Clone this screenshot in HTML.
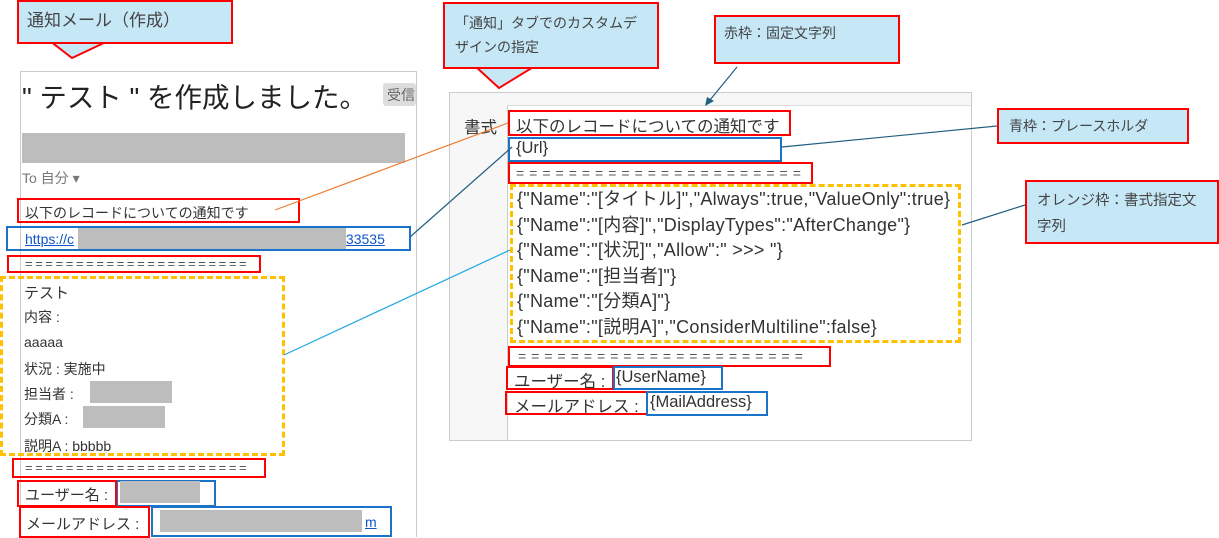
<!DOCTYPE html>
<html><head><meta charset="utf-8"><style>
body{margin:0;width:1219px;height:538px;position:relative;background:#fff;overflow:hidden;font-family:"Liberation Sans","Noto Sans CJK JP",sans-serif;color:#333}
.a{position:absolute;box-sizing:border-box;white-space:nowrap}
.cb{background:#c5e7f6;border:2px solid #f00;font-size:14px;color:#444;padding:6px 10px;line-height:24px;white-space:normal}
.r{border:2px solid #f00}
.b{border:2px solid #1a73c8}
.g{background:#bdbdbd}
.t{font-size:14px;color:#333}
.m{font-size:16.5px;color:#333}
.eq{letter-spacing:2.6px}
.eq2{letter-spacing:5px}
</style></head><body>
<svg class="a" style="left:0;top:0" width="1219" height="538">
<polygon points="50,41 108,41 72,58" fill="#c5e7f6" stroke="#f00" stroke-width="2"/>
<polygon points="475,66 535,66 499,88" fill="#c5e7f6" stroke="#f00" stroke-width="2"/>
</svg>
<div class="a cb" style="left:17px;top:0;width:216px;height:44px;font-size:17px;padding:7px 8px">通知メール（作成）</div>
<div class="a cb" style="left:443px;top:2px;width:216px;height:67px;line-height:24px;padding:7px 10px">「通知」タブでのカスタムデザインの指定</div>
<svg class="a" style="left:0;top:0" width="1219" height="538"><rect x="50" y="38" width="57" height="4" fill="#c5e7f6"/><rect x="476" y="63" width="58" height="4" fill="#c5e7f6"/></svg>
<div class="a cb" style="left:714px;top:15px;width:186px;height:49px;padding:4px 8px">赤枠：固定文字列</div>
<div class="a cb" style="left:997px;top:108px;width:192px;height:36px;padding:4px 10px">青枠：プレースホルダ</div>
<div class="a cb" style="left:1025px;top:180px;width:194px;height:64px;padding:6px 18px 6px 10px;line-height:26px;font-size:14.5px">オレンジ枠：書式指定文字列</div>

<!-- email panel -->
<div class="a" style="left:20px;top:71px;width:397px;height:466px;border:1px solid #ccc;border-bottom:none"></div>
<div class="a" style="left:22px;top:75px;font-size:27.5px;color:#222">" テスト " を作成しました。</div>
<div class="a" style="left:383px;top:83px;width:33px;height:23px;background:#ddd;border-radius:3px;font-size:14px;color:#666;padding:2px 4px;overflow:hidden">受信</div>
<div class="a g" style="left:22px;top:133px;width:383px;height:30px"></div>
<div class="a t" style="left:22px;top:168px;color:#777">To 自分 ▾</div>
<div class="a r t" style="left:17px;top:198px;width:283px;height:25px;padding:3px 6px 0 6px">以下のレコードについての通知です</div>
<div class="a b t" style="left:6px;top:226px;width:405px;height:25px;padding:3px 0 0 17px;color:#1155cc;text-decoration:underline">https://c<span style="display:inline-block;width:268px"></span>/33535</div>
<div class="a g" style="left:78px;top:228px;width:268px;height:21px"></div>
<div class="a r t eq" style="left:7px;top:255px;width:254px;height:18px;font-size:13px;line-height:14px;padding-left:16px;color:#555">======================</div>
<div class="a" style="left:0;top:276px;width:285px;height:180px;border:3px dashed #ffc000"></div>
<div class="a t" style="left:24px;top:282px;font-size:15px">テスト</div>
<div class="a t" style="left:24px;top:307px">内容 :</div>
<div class="a t" style="left:24px;top:334px">aaaaa</div>
<div class="a t" style="left:24px;top:359px">状況 : 実施中</div>
<div class="a t" style="left:24px;top:384px">担当者 :</div>
<div class="a g" style="left:90px;top:381px;width:82px;height:22px"></div>
<div class="a t" style="left:24px;top:409px">分類A :</div>
<div class="a g" style="left:83px;top:406px;width:82px;height:22px"></div>
<div class="a t" style="left:24px;top:436px">説明A : bbbbb</div>
<div class="a r t eq" style="left:12px;top:458px;width:254px;height:20px;font-size:13px;line-height:16px;padding-left:11px;color:#555">======================</div>
<div class="a b" style="left:116px;top:480px;width:100px;height:27px"></div>
<div class="a g" style="left:120px;top:481px;width:80px;height:22px"></div>
<div class="a r t" style="left:17px;top:480px;width:100px;height:27px;padding:2px 0 0 6px;font-size:15px">ユーザー名 :</div>
<div class="a b" style="left:151px;top:506px;width:241px;height:31px;padding:6px 0 0 212px;font-size:14px;color:#1155cc;text-decoration:underline">m</div>
<div class="a g" style="left:160px;top:510px;width:202px;height:22px"></div>
<div class="a r t" style="left:19px;top:506px;width:131px;height:32px;padding:5px 0 0 5px;font-size:15px">メールアドレス :</div>

<!-- form panel -->
<div class="a" style="left:449px;top:92px;width:523px;height:349px;background:#f7f7f7;border:1px solid #ccc"></div>
<div class="a" style="left:507px;top:105px;width:464px;height:335px;background:#fff;border-left:1px solid #ccc;border-top:1px solid #ddd"></div>
<div class="a m" style="left:464px;top:114px">書式</div>
<div class="a r m" style="left:508px;top:110px;width:283px;height:26px;padding:1px 0 0 6px">以下のレコードについての通知です</div>
<div class="a b m" style="left:508px;top:137px;width:274px;height:25px;padding:0 0 0 6px">{Url}</div>
<div class="a r m eq2" style="left:508px;top:162px;width:305px;height:22px;font-size:14px;line-height:18px;padding-left:6px;color:#555">======================</div>
<div class="a" style="left:510px;top:184px;width:451px;height:159px;border:3px dashed #ffc000"></div>
<div class="a m" style="left:517px;top:187px;line-height:25.6px;font-size:18px;letter-spacing:0.3px">{"Name":"[タイトル]","Always":true,"ValueOnly":true}<br>{"Name":"[内容]","DisplayTypes":"AfterChange"}<br>{"Name":"[状況]","Allow":" &gt;&gt;&gt; "}<br>{"Name":"[担当者]"}<br>{"Name":"[分類A]"}<br>{"Name":"[説明A]","ConsiderMultiline":false}</div>
<div class="a r m eq2" style="left:508px;top:346px;width:323px;height:21px;font-size:14px;line-height:17px;padding-left:8px;color:#555">======================</div>
<div class="a r m" style="left:506px;top:366px;width:108px;height:24px;padding-left:6px">ユーザー名 :</div>
<div class="a b m" style="left:613px;top:366px;width:110px;height:24px;padding-left:1px">{UserName}</div>
<div class="a r m" style="left:505px;top:391px;width:143px;height:24px;padding-left:7px">メールアドレス :</div>
<div class="a b m" style="left:646px;top:391px;width:122px;height:25px;padding-left:2px">{MailAddress}</div>

<svg class="a" style="left:0;top:0" width="1219" height="538">
<line x1="275" y1="210" x2="508" y2="123" stroke="#ed7d31" stroke-width="1.2"/>
<line x1="410" y1="237" x2="512" y2="147" stroke="#1f5f7f" stroke-width="1.2"/>
<line x1="284" y1="355" x2="510" y2="250" stroke="#1ea7e0" stroke-width="1.2"/>
<line x1="782" y1="147" x2="997" y2="126" stroke="#1f5f7f" stroke-width="1.2"/>
<line x1="962" y1="225" x2="1025" y2="205" stroke="#1f5f7f" stroke-width="1.2"/>
<line x1="737" y1="67" x2="710" y2="100" stroke="#1f5f7f" stroke-width="1.2"/>
<polygon points="705,106 707,97 714,101" fill="#1f5f7f"/>
</svg>
</body></html>
